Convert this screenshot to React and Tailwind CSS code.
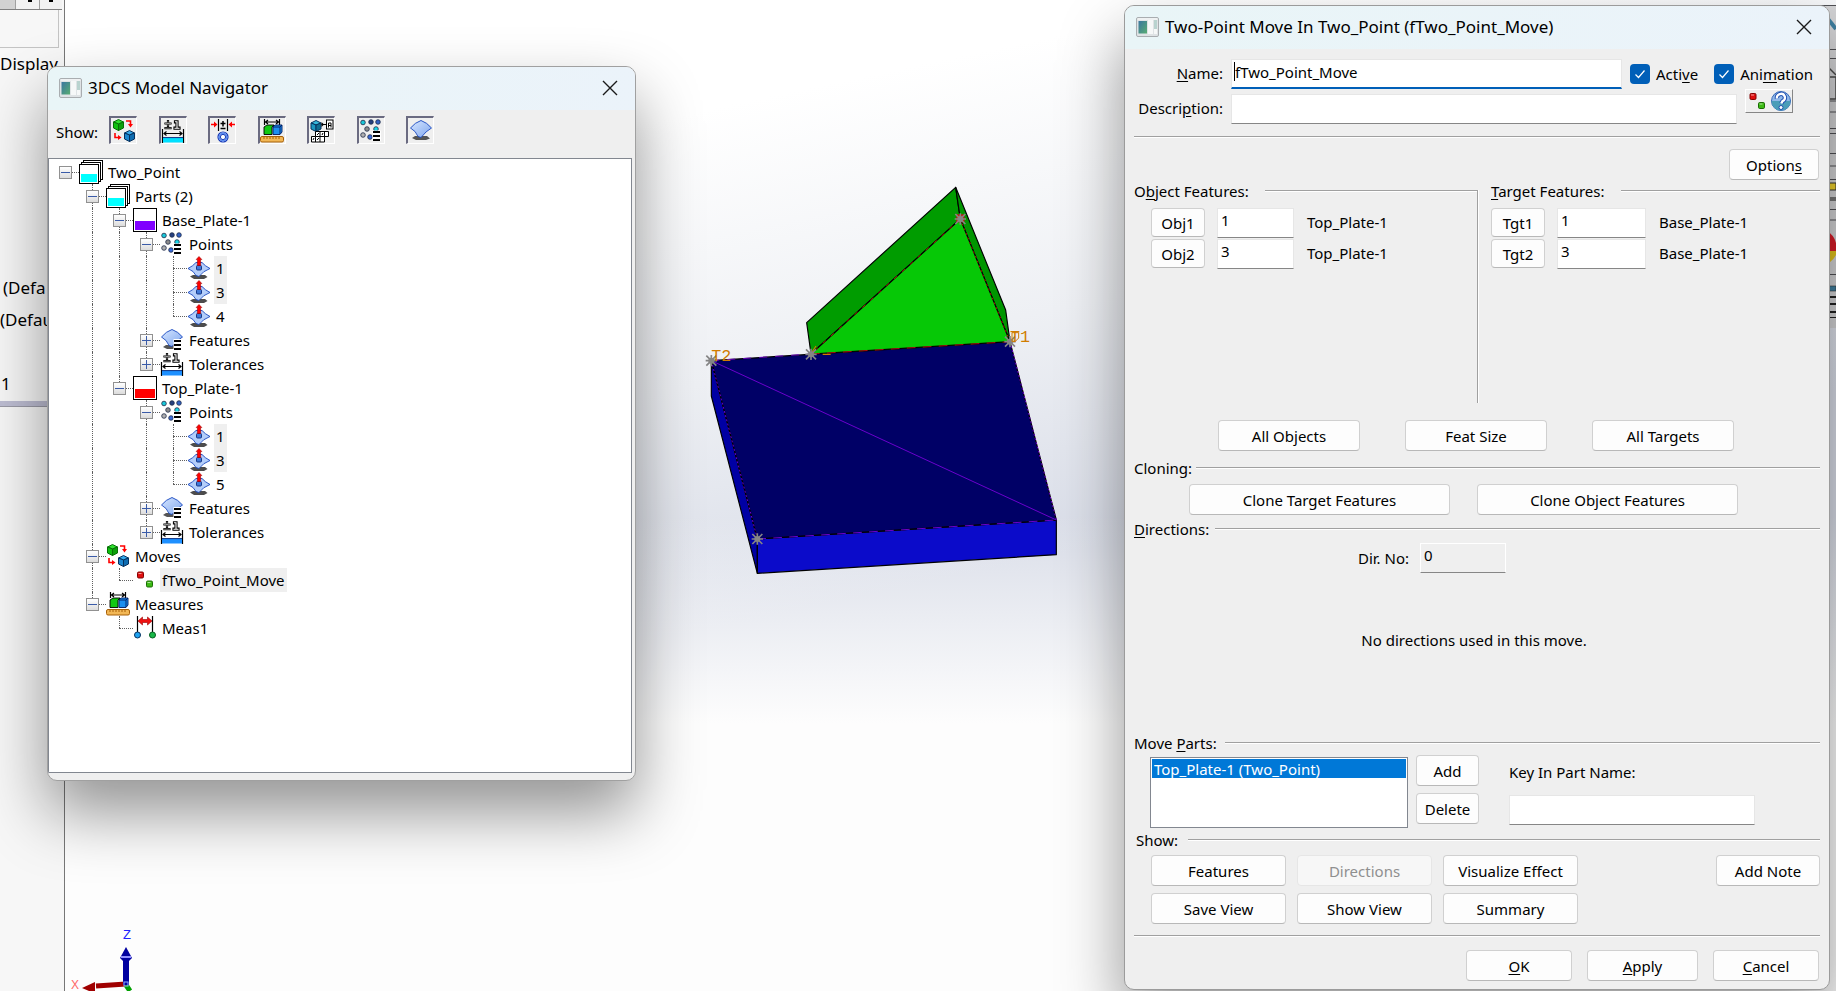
import React from "react";

/* ---------- icons ---------- */

function AppIcon() {
  return (
    <svg width="23" height="20" viewBox="0 0 23 20" className="shrink-0" aria-hidden="true">
      <defs>
        <linearGradient id="appPane" x1="0" y1="0" x2="1" y2="1">
          <stop offset="0" stopColor="#3b76a0" />
          <stop offset="1" stopColor="#58ad72" />
        </linearGradient>
      </defs>
      <rect x="0.5" y="0.5" width="22" height="19" rx="1.5" fill="#dfe3e5" stroke="#a9adb0" />
      <path d="M1.500 2 H21.500" stroke="#fff" />
      <rect x="2.500" y="4" width="8.500" height="12.500" fill="url(#appPane)" />
      <rect x="12" y="3" width="5" height="14" fill="#f6f8f8" />
      <rect x="18" y="3" width="3" height="9" fill="#b9d3cf" />
      <rect x="18" y="12" width="3" height="5" fill="#f6f8f8" />
    </svg>
  );
}

function CloseIcon() {
  return (
    <svg width="16" height="16" viewBox="0 0 16 16" aria-hidden="true">
      <path d="M1 1 L15 15 M15 1 L1 15" stroke="#1a1a1a" strokeWidth="1.4" fill="none" />
    </svg>
  );
}

function Svg24({ children }) {
  return (
    <svg width="24" height="24" viewBox="0 0 24 24" className="shrink-0" aria-hidden="true">
      {children}
    </svg>
  );
}

function Cube({ x, y, top, left, right, edge }) {
  return (
    <g transform={`translate(${x} ${y})`} stroke={edge} strokeWidth="1" strokeLinejoin="round">
      <path d="M5.5 0.5 L10.5 3 L5.5 5 L0.5 3 Z" fill={top} />
      <path d="M0.5 3 L5.5 5 V11.5 L0.5 9 Z" fill={left} />
      <path d="M10.5 3 L5.5 5 V11.5 L10.5 9 Z" fill={right} />
    </g>
  );
}

function MovesIcon() {
  return (
    <Svg24>
      <Cube x={1} y={0} top="#2ee02e" left="#10c010" right="#0aa00a" edge="#067006" />
      <Cube x={12} y={11} top="#35a8ea" left="#1b86cf" right="#0f6cb0" edge="#06315e" />
      <path d="M14 2 H18.500 V6" stroke="#f00" strokeWidth="1.600" fill="none" />
      <path d="M16 5 H21 L18.500 8.500 Z" fill="#f00" />
      <path d="M3 14 V18.500 H6" stroke="#f00" strokeWidth="1.600" fill="none" />
      <path d="M6 16 V21 L9.500 18.500 Z" fill="#f00" />
    </Svg24>
  );
}

const plusMinus = "M4.500 4.500 H9.500 M7 2.200 V6.800 M4.500 9.200 H9.500";
const digitOne = "M14.500 2.800 H16 V9 M14 9.200 H18";

function ToleranceIcon({ water }) {
  return (
    <Svg24>
      <path d="M1.5 10 V24 M22.5 10 V24" stroke="#000" strokeWidth="1.2" />
      <path d="M3 14.5 H21 M5.500 12.500 L3 14.5 L5.500 16.500 M18.500 12.500 L21 14.5 L18.500 16.500" stroke="#000" strokeWidth="1.2" fill="none" />
      <rect x="2" y="19" width="20" height="4.500" fill={water} />
      <path d="M2 18.6 H22" stroke="#002a80" strokeWidth="1" />
      <g fill="none" strokeLinecap="square">
        <path d={plusMinus} stroke="#000" strokeWidth="2.200" />
        <path d={digitOne} stroke="#000" strokeWidth="3.200" />
        <path d={plusMinus} stroke="#fff" strokeWidth="0.500" />
        <path d={digitOne} stroke="#fff" strokeWidth="1.100" />
      </g>
    </Svg24>
  );
}

function GtolIcon() {
  return (
    <Svg24>
      <path d="M0 5.5 H4 M24 5.5 H20" stroke="#f00" strokeWidth="1.6" />
      <path d="M3 2.5 L6.5 5.5 L3 8.5 Z M21 2.5 L17.500 5.5 L21 8.500 Z" fill="#f00" />
      <path d="M7.500 0 V12 M16.500 0 V12" stroke="#000" strokeWidth="1.2" />
      <path d="M9.500 4.500 H14.500 M12 2 V7.500 M9.500 9.500 H14.500" stroke="#000" strokeWidth="1.500" />
      <circle cx="12" cy="18" r="5" fill="#fff" stroke="#1438b8" strokeWidth="1.200" />
      <circle cx="12" cy="18" r="3.600" fill="#fff" stroke="#5a8cf0" strokeWidth="1.600" />
      <circle cx="12" cy="18" r="2.600" fill="#fff" stroke="#1438b8" strokeWidth="1" />
    </Svg24>
  );
}

function MeasuresIcon() {
  return (
    <Svg24>
      <path d="M4.5 0 V6 M19.500 0 V6 M5 3 H19 M8 1 L5.500 3 L8 5 M16 1 L18.500 3 L16 5" stroke="#000" strokeWidth="1.2" fill="none" />
      <path d="M4 8 L7 6 H14 L12 8 V15.500 H4 Z" fill="#12c812" stroke="#000" strokeWidth="0.900" />
      <path d="M13 8 L15 6 H22 V13 L20 15.500 H13 Z" fill="#1c8ff0" stroke="#001b60" strokeWidth="0.900" />
      <path d="M13 8 H20 V15 M20 8 L22 6" stroke="#001b60" strokeWidth="0.900" fill="none" />
      <rect x="0.500" y="17.500" width="23" height="5.500" rx="1.500" fill="#f2b755" stroke="#a86008" />
      <path d="M4 18 V20 M7 18 V20 M10 18 V20 M13 18 V20 M16 18 V20 M19 18 V20" stroke="#a86008" />
    </Svg24>
  );
}

function DatumIcon() {
  return (
    <Svg24>
      <Cube x={0.5} y={1} top="#35b8da" left="#1b96bf" right="#0f6c90" edge="#06315e" />
      <path d="M11.500 5.500 H16" stroke="#000" strokeWidth="1.2" />
      <path d="M11.500 3 L14 5.500 L11.500 8 Z" fill="#000" />
      <rect x="16.500" y="1" width="6.500" height="9" fill="#fff" stroke="#000" />
      <path d="M18.500 8.500 V4 H21 V8.500 M18.500 6.500 H21" stroke="#000" fill="none" />
      <path d="M5.500 12.500 H18.500 V17.500 H14.500 V23 H1.500 V17.500 H5.500 Z M5.500 17.500 H14.500 M10 12.500 V23 M14.500 12.500 V17.500 M5.500 17.500 V23" stroke="#000" fill="#fff" />
      <path d="M7 16 L9 14 M12 16 L13 14 M3 21 L4 19 M7 21 L9 19" stroke="#000" />
    </Svg24>
  );
}

function PointsIcon() {
  const dots = [
    [4, 3.5, "#19c7d8"], [12, 3, "#26407f"], [19, 3, "#3262c4"],
    [8, 10, "#8b8b8b"], [17, 10, "#19d8e8"],
    [4, 16, "#b0b0b0"], [11, 18, "#3a6ad8"],
  ];
  return (
    <Svg24>
      {dots.map(([cx, cy, fill]) => (
        <circle key={`${cx}-${cy}`} cx={cx} cy={cy} r="2.300" fill={fill} stroke="#1d2a48" strokeWidth="0.800" />
      ))}
      <path d="M13.500 11.500 H22 V22 H13.500 Z" fill="#fff" />
      <path d="M14 13 H21 M14 17 H21 M14 21 H21" stroke="#000" strokeWidth="2" />
    </Svg24>
  );
}

function Surface() {
  return (
    <g>
      <defs>
        <linearGradient id="surf" x1="0" y1="0" x2="1" y2="1">
          <stop offset="0" stopColor="#d6e6ff" />
          <stop offset="1" stopColor="#7fa6ee" />
        </linearGradient>
      </defs>
      <path d="M3 19 L6 17 H18 L21 19.500 L17 21 H7 Z" fill="#555" />
      <path d="M1.500 9 Q6 3.500 12 1.500 Q18 3.500 22.500 9 Q17 12 12 18.500 L9 17.500 Q7 12 1.500 9 Z" fill="url(#surf)" stroke="#1747c0" strokeWidth="0.900" />
    </g>
  );
}

function SurfaceIcon() {
  return <Svg24><Surface /></Svg24>;
}

function FeaturesIcon() {
  return (
    <Svg24>
      <Surface />
      <path d="M13.500 11 H23 V22 H13.500 Z" fill="#fff" />
      <path d="M14 13 H21 M14 17 H21 M14 21 H21" stroke="#000" strokeWidth="2" />
    </Svg24>
  );
}

function PointIcon() {
  return (
    <Svg24>
      <path d="M3 20.500 L6 19 H18 L20.500 21 L17 23 H7 Z" fill="#4c4c4c" />
      <path d="M1 12.500 Q6 10 9 6.500 H15 Q18 10 23 12.500 Q16 15 12 20.500 L9 19.500 Q7 15 1 12.500 Z" fill="#b4cefa" stroke="#1747c0" strokeWidth="0.900" />
      <rect x="9.500" y="9.500" width="5" height="4.500" rx="1" fill="#3f78d8" stroke="#0c2c80" strokeWidth="0.900" />
      <path d="M12 0.500 L14.800 3.500 H13.600 V9.500 H10.400 V3.500 H9.200 Z" fill="#f00" stroke="#a00000" strokeWidth="0.600" />
    </Svg24>
  );
}

function PartIcon({ fill }) {
  return (
    <Svg24>
      <rect x="0.500" y="0.500" width="23" height="23" fill="#fff" stroke="#000" strokeWidth="1" />
      <rect x="2" y="13" width="20" height="9" fill={fill} />
    </Svg24>
  );
}

function AssemblyIcon() {
  return (
    <Svg24>
      <rect x="4.500" y="0.500" width="19" height="19" fill="#fff" stroke="#000" />
      <rect x="2.500" y="2.500" width="19" height="19" fill="#fff" stroke="#000" />
      <rect x="0.500" y="4.500" width="19" height="19" fill="#fff" stroke="#000" />
      <rect x="2" y="14" width="16" height="8" fill="#0ff" />
    </Svg24>
  );
}

function Block({ x, y, fill, edge }) {
  return (
    <g>
      <rect x={x} y={y} width="6" height="6" rx="1.200" fill={fill} stroke={edge} />
      <path d={`M${x + 1} ${y + 1.500} h3`} stroke="#fff" strokeOpacity="0.600" />
    </g>
  );
}

function TwoPointIcon() {
  return (
    <Svg24>
      <Block x={4.5} y={4} fill="#e01010" edge="#800000" />
      <Block x={13.5} y={13} fill="#3cba14" edge="#1b6a05" />
    </Svg24>
  );
}

function MeasureIcon() {
  return (
    <Svg24>
      <path d="M4.500 0 V16 M19.500 0 V16" stroke="#000" strokeWidth="1.200" />
      <path d="M5 5 L9.500 1 V3.500 H14.500 V1 L19 5 L14.500 9 V6.500 H9.500 V9 Z" fill="#f01010" stroke="#900" strokeWidth="0.600" />
      <circle cx="4.500" cy="19" r="3" fill="#1ea2f0" stroke="#06315e" />
      <circle cx="19.500" cy="19" r="3" fill="#18b848" stroke="#065e20" />
    </Svg24>
  );
}

/* ---------- model navigator ---------- */

const asm = <AssemblyIcon />;
const point = <PointIcon />;
const points = <PointsIcon />;
const features = <FeaturesIcon />;
const tolerances = <ToleranceIcon water="#1e90ff" />;

const plate = (name, fill, labels) => ({
  label: name,
  icon: <PartIcon fill={fill} />,
  children: [
    {
      label: "Points",
      icon: points,
      children: labels.map((label, i) => ({ label, icon: point, marked: i < 2 })),
    },
    { label: "Features", icon: features, collapsed: true },
    { label: "Tolerances", icon: tolerances, collapsed: true },
  ],
});

const tree = {
  label: "Two_Point",
  icon: asm,
  children: [
    {
      label: "Parts (2)",
      icon: asm,
      children: [
        plate("Base_Plate-1", "#8000ff", ["1", "3", "4"]),
        plate("Top_Plate-1", "#ff0000", ["1", "3", "5"]),
      ],
    },
    {
      label: "Moves",
      icon: <MovesIcon />,
      children: [{ label: "fTwo_Point_Move", icon: <TwoPointIcon />, marked: true }],
    },
    {
      label: "Measures",
      icon: <MeasuresIcon />,
      children: [{ label: "Meas1", icon: <MeasureIcon /> }],
    },
  ],
};

function Expander({ open, label }) {
  return (
    <button
      type="button"
      aria-label={`${open ? "Collapse" : "Expand"} ${label}`}
      className="relative col-start-1 row-start-1 size-[13px] self-center justify-self-center border border-[#919191] bg-gradient-to-b from-white to-[#dcdcdc]"
    >
      <svg width="11" height="11" viewBox="0 0 11 11" className="block" aria-hidden="true">
        <path d={open ? "M1 5.5 H10" : "M1 5.5 H10 M5.5 1 V10"} stroke="#3a5ba8" fill="none" />
      </svg>
    </button>
  );
}

function TreeNode({ node, guides, root, last }) {
  const open = Boolean(node.children);
  return (
    <li role="treeitem" aria-expanded={open || node.collapsed ? open : undefined}>
      <div className="flex h-6 items-center">
        {guides.map((on, i) => (
          <span key={i} className="flex h-6 w-[27px] shrink-0 pl-[13px]">
            {on && <span className="border-l border-dotted border-[#606060]" />}
          </span>
        ))}
        <span className="grid h-6 w-[27px] shrink-0">
          <span className="col-start-1 row-start-1 grid grid-rows-2 pl-[13px]">
            <span className={root ? "" : "border-l border-dotted border-[#606060]"} />
            <span
              className={
                last
                  ? "border-t border-dotted border-[#606060]"
                  : "border-t border-l border-dotted border-[#606060]"
              }
            />
          </span>
          {(open || node.collapsed) && <Expander open={open} label={node.label} />}
        </span>
        {node.icon}
        <span className={node.marked ? "ml-[3px] bg-[#efefef] px-0.5 leading-6" : "ml-[3px] px-0.5 leading-6"}>
          {node.label}
        </span>
      </div>
      {open && (
        <ul role="group">
          {node.children.map((c, i) => (
            <TreeNode
              key={i}
              node={c}
              guides={[...guides, !last]}
              last={i === node.children.length - 1}
            />
          ))}
        </ul>
      )}
    </li>
  );
}

const toolbar = [
  ["Moves", <MovesIcon />],
  ["Tolerances", <ToleranceIcon water="#00e0ff" />],
  ["GD&T", <GtolIcon />],
  ["Measures", <MeasuresIcon />],
  ["Datums", <DatumIcon />],
  ["Points", points],
  ["Features", <SurfaceIcon />],
];

function TitleBar({ title }) {
  return (
    <header className="flex h-[43px] shrink-0 items-center bg-gradient-to-r from-[#e9f5f7] to-[#ebf3fa] pr-[17px] pb-0.5 pl-[11px]">
      <AppIcon />
      <h1 className="ml-1.5 flex-1 text-[17px]">{title}</h1>
      <button type="button" aria-label="Close">
        <CloseIcon />
      </button>
    </header>
  );
}

function Navigator() {
  return (
    <section
      aria-label="3DCS Model Navigator"
      className="absolute top-[66px] left-[47px] flex w-[589px] flex-col overflow-hidden rounded-[10px] border border-[#a0a0a0] bg-[#efefef] shadow-[0_32px_64px_rgba(0,0,0,0.42)]"
    >
      <TitleBar title="3DCS Model Navigator" />
      <div className="flex h-[48px] items-center pb-2 pl-2">
        <span className="w-[53px] pt-1">Show:</span>
        <div className="flex w-[325px] justify-between">
          {toolbar.map(([label, icon]) => (
            <button
              key={label}
              type="button"
              aria-label={label}
              className="flex size-7 items-center justify-center border-t-2 border-r border-b border-l-2 border-t-[#6a6a80] border-r-white border-b-white border-l-[#6a6a80]"
            >
              {icon}
            </button>
          ))}
        </div>
      </div>
      <div className="mr-[3px] mb-[7px] min-h-[615px] border border-[#828790] bg-white pl-[3px] pt-px">
        <ul role="tree" aria-label="Model">
          <TreeNode node={tree} guides={[]} root last />
        </ul>
      </div>
    </section>
  );
}

/* ---------- move dialog ---------- */

function Btn({ className = "", ...props }) {
  return (
    <button
      type="button"
      className={`shrink-0 rounded border border-[#d0d0d0] border-b-[#b8b8b8] bg-[#fdfdfd] whitespace-nowrap disabled:border-[#e6e6e6] disabled:bg-[#f7f7f7] disabled:text-[#8f8f8f] ${className}`}
      {...props}
    />
  );
}

function Key({ children }) {
  return <span className="underline underline-offset-2">{children}</span>;
}

function Line() {
  return <span className="h-0.5 flex-1 border-t border-b border-t-[#a0a0a0] border-b-white" />;
}

function Legend({ className, children }) {
  return (
    <div className={`flex items-center ${className}`}>
      <h2>{children}</h2>
      <Line />
    </div>
  );
}

function Check({ id, children }) {
  return (
    <span className="flex shrink-0 items-center gap-1.5">
      <span className="grid size-5 place-items-center">
        <input
          id={id}
          type="checkbox"
          defaultChecked
          className="col-start-1 row-start-1 size-5 appearance-none rounded bg-[#005fb8]"
        />
        <svg width="12" height="12" viewBox="0 0 12 12" className="pointer-events-none col-start-1 row-start-1" aria-hidden="true">
          <path d="M1.500 6.500 L4.500 9.500 L10.500 2.500" stroke="#fff" strokeWidth="1.200" fill="none" />
        </svg>
      </span>
      <label htmlFor={id}>{children}</label>
    </span>
  );
}

const field =
  "h-[30px] border border-[#e6e6e6] border-b-[#868686] bg-white px-[3px] pb-1.5 outline-none";

function FeatureRow({ button, value, part, width }) {
  return (
    <div className="flex h-[31px] items-center">
      <Btn className="h-[29px] w-[54px]">{button}</Btn>
      <input aria-label={button} defaultValue={value} className={`ml-3 ${field} ${width}`} />
      <span className="ml-[13px] pb-0.5">{part}</span>
    </div>
  );
}

function MoveDialog() {
  return (
    <section
      aria-label="Two-Point Move"
      className="absolute top-[5px] right-[6px] flex w-[706px] flex-col overflow-hidden rounded-[10px] border border-[#9b9b9b] bg-[#efefef] shadow-[0_32px_64px_rgba(0,0,0,0.42)]"
    >
      <TitleBar title="Two-Point Move In Two_Point (fTwo_Point_Move)" />
      <form className="flex flex-col px-[9px] pt-2.5 pb-2">
        <div className="flex h-[30px] items-center pr-[7px]">
          <label htmlFor="name" className="mr-2 w-[89px] pb-0.5 text-right">
            <Key>N</Key>ame:
          </label>
          <div className="relative flex flex-1">
            <input
              id="name"
              defaultValue="fTwo_Point_Move"
              className="h-[30px] w-full border border-b-2 border-[#e6e6e6] border-b-[#005fb8] bg-white px-[3px] pb-1 outline-none"
            />
            <span className="absolute top-[3px] left-[3px] h-[19px] w-px bg-black" />
          </div>
          <div className="ml-2 flex gap-4">
            <Check id="active">
              Acti<Key>v</Key>e
            </Check>
            <Check id="animation">
              Ani<Key>m</Key>ation
            </Check>
          </div>
        </div>
        <div className="flex h-[35px]">
          <label htmlFor="description" className="mr-2 w-[89px] pt-2 text-right">
            Descri<Key>p</Key>tion:
          </label>
          <input id="description" className={`mt-[5px] flex-1 ${field}`} />
          <button
            type="button"
            aria-label="Help"
            className="mr-[27px] ml-2 flex h-6 w-12 border border-t-white border-r-[#868686] border-b-[#868686] border-l-white"
          >
            <svg width="46" height="22" viewBox="0 0 46 22" aria-hidden="true">
              <Block x={4} y={3.5} fill="#e01010" edge="#800000" />
              <Block x={12.5} y={12.5} fill="#3cba14" edge="#1b6a05" />
              <circle cx="35" cy="11" r="9.500" fill="#8fb8e8" stroke="#3768b8" />
              <path d="M25.500 11 A9.500 9.500 0 0 0 44.500 11 Z" fill="#4a9db8" />
              <path d="M31 8.500 A4 3.800 0 1 1 36.500 11.200 L35.200 13.500" stroke="#1f4fb0" strokeWidth="4.400" fill="none" />
              <path d="M31 8.500 A4 3.800 0 1 1 36.500 11.200 L35.200 13.500" stroke="#fff" strokeWidth="2.400" fill="none" />
              <circle cx="35" cy="17.500" r="2" fill="#fff" stroke="#1f4fb0" />
            </svg>
          </button>
        </div>
        <div className="mt-3 flex">
          <Line />
        </div>
        <div className="mt-[11px] flex justify-end pr-px">
          <Btn className="h-[31px] w-[90px]">
            Option<Key>s</Key>
          </Btn>
        </div>

        <div className="flex h-[223px]">
          <div className="w-[343px]">
            <Legend className="h-[22px] gap-4">
              O<Key>b</Key>ject Features:
            </Legend>
            <div className="mt-[5px] pl-[17px]">
              <FeatureRow button="Obj1" value="1" part="Top_Plate-1" width="w-[77px]" />
              <FeatureRow button="Obj2" value="3" part="Top_Plate-1" width="w-[77px]" />
            </div>
          </div>
          <span className="mt-[10px] w-0.5 border-r border-l border-r-white border-l-[#a0a0a0]" />
          <div className="ml-3 flex-1">
            <Legend className="h-[22px] gap-4">
              <Key>T</Key>arget Features:
            </Legend>
            <div className="mt-[5px]">
              <FeatureRow button="Tgt1" value="1" part="Base_Plate-1" width="w-[89px]" />
              <FeatureRow button="Tgt2" value="3" part="Base_Plate-1" width="w-[89px]" />
            </div>
          </div>
        </div>

        <div className="mt-[17px] flex gap-[45px] pl-[84px]">
          <Btn className="h-[31px] w-[142px]">All Objects</Btn>
          <Btn className="h-[31px] w-[142px]">Feat Size</Btn>
          <Btn className="h-[31px] w-[142px]">All Targets</Btn>
        </div>

        <Legend className="h-[33px] gap-1">Cloning:</Legend>
        <div className="flex gap-[27px] pl-[55px]">
          <Btn className="h-[31px] w-[261px]">Clone Target Features</Btn>
          <Btn className="h-[31px] w-[261px]">Clone Object Features</Btn>
        </div>

        <Legend className="h-[28px] gap-1.5">
          <Key>D</Key>irections:
        </Legend>
        <div className="flex items-center gap-[11px] pl-[224px]">
          <label htmlFor="dir">Dir. No:</label>
          <input
            id="dir"
            readOnly
            value="0"
            className="h-[30px] w-[86px] border border-white border-b-[#868686] bg-[#efefef] px-[3px] pb-1.5 outline-none"
          />
        </div>
        <p className="mt-[56px] pr-1.5 text-center leading-[22px]">No directions used in this move.</p>

        <Legend className="mt-[81px] h-[22px] gap-2">
          Move <Key>P</Key>arts:
        </Legend>
        <div className="mt-px flex pl-4">
          <select
            multiple
            size={3}
            aria-label="Move parts"
            defaultValue={["top"]}
            className="mt-0.5 mr-2 h-[71px] w-[258px] overflow-hidden border border-[#828790] bg-white p-px outline-none"
          >
            <option
              value="top"
              className="h-[19px] bg-[linear-gradient(#0078d7,#0078d7)] p-0 pl-0.5 leading-[19px] text-white checked:text-white"
            >
              Top_Plate-1 (Two_Point)
            </option>
          </select>
          <div className="flex flex-col gap-[7px]">
            <Btn className="h-[31px] w-[63px]">Add</Btn>
            <Btn className="h-[31px] w-[63px]">Delete</Btn>
          </div>
          <div className="ml-[30px] flex flex-col gap-3 pt-1.5">
            <label htmlFor="part" className="leading-[22px]">Key In Part Name:</label>
            <input id="part" className={`w-[246px] ${field}`} />
          </div>
        </div>

        <Legend className="mb-[3px] h-6 gap-2.5 pl-0.5">Show:</Legend>
        <div className="flex justify-between pl-[17px]">
          <div className="grid grid-cols-[135px_135px_135px] gap-x-[11px] gap-y-[7px]">
            <Btn className="h-[31px]">Features</Btn>
            <Btn className="h-[31px]" disabled>Directions</Btn>
            <Btn className="h-[31px]">Visualize Effect</Btn>
            <Btn className="h-[31px]">Save View</Btn>
            <Btn className="h-[31px]">Show View</Btn>
            <Btn className="h-[31px]">Summary</Btn>
          </div>
          <Btn className="h-[31px] w-[104px]">Add Note</Btn>
        </div>
        <div className="mt-[11px] flex">
          <Line />
        </div>
        <div className="mt-[13px] flex justify-end gap-[15px] pr-px">
          <Btn className="h-[31px] w-[106px]">
            <Key>O</Key>K
          </Btn>
          <Btn className="h-[31px] w-[111px]">
            <Key>A</Key>pply
          </Btn>
          <Btn className="h-[31px] w-[106px]">
            <Key>C</Key>ancel
          </Btn>
        </div>
      </form>
    </section>
  );
}

/* ---------- CAD viewport ---------- */

function Star({ x, y, red }) {
  return (
    <g>
      {red && <rect x={x - 12} y={y - 14} width="24" height="24" fill="#d01010" />}
      <path
        d={`M${x - 17} ${y} h34 M${x} ${y - 17} v34 M${x - 15} ${y - 15} l30 30 M${x + 15} ${y - 15} l-30 30`}
        stroke="#858585"
        strokeWidth="5"
      />
      <circle cx={x} cy={y} r="9" fill="#858585" />
    </g>
  );
}

function Model() {
  return (
    <svg
      width="400"
      height="420"
      viewBox="0 0 1200 1260"
      className="absolute top-[170px] left-[625px] font-['Liberation_Mono',monospace]"
      role="img"
      aria-label="Base plate and top plate"
    >
      <g stroke="#000" strokeWidth="3.500" strokeLinejoin="round">
        <path d="M797 52 L350 458 L363 552 L811 147 Z" fill="#009c00" />
        <path d="M797 52 L947 420 L960 515 L811 147 Z" fill="#009600" />
        <path d="M64 572 V678 L202 1210 V1107 Z" fill="#0000a4" />
        <path d="M202 1107 L1099 1050 V1154 L202 1210 Z" fill="#0b0bca" />
        <path d="M64 572 L960 515 L1099 1050 L202 1107 Z" fill="#000066" />
        <path d="M811 147 L363 552 L960 515 Z" fill="#06c806" />
      </g>
      <g stroke="#d01010" strokeWidth="2.500" fill="none">
        <path d="M811 147 L363 552" strokeDasharray="12 20" />
        <path d="M811 147 L960 515" strokeDasharray="6 9" />
        <path d="M363 552 L960 515" strokeDasharray="26 22" />
      </g>
      <g stroke="#6a00cc" strokeWidth="3" fill="none">
        <path d="M64 572 L1099 1050" />
        <path d="M64 572 L363 552" strokeDasharray="24 24" />
        <path d="M64 572 L202 1107 M960 515 L1099 1050" strokeDasharray="6 7" />
        <path d="M202 1107 L1099 1050" strokeDasharray="26 22" />
      </g>
      <path d="M362 552 L378 528 M398 553 H422" stroke="#d07c00" strokeWidth="3.500" fill="none" />
      <Star x={811} y={147} red />
      <Star x={64} y={572} />
      <Star x={363} y={553} />
      <Star x={960} y={515} />
      <Star x={202} y={1107} />
      <text x="64" y="573" fontSize="50" fill="#d07c00">T2</text>
      <text x="960" y="516" fontSize="50" fill="#d07c00">T1</text>
      <path d="M966 488 V514 H976 L986 504 V488 Z" stroke="#d07c00" strokeWidth="3" fill="none" />
    </svg>
  );
}

function Triad() {
  return (
    <svg
      width="70"
      height="64"
      viewBox="0 0 70 64"
      className="absolute bottom-0 left-0 font-['Liberation_Sans',sans-serif]"
      role="img"
      aria-label="Axes"
    >
      <text x="58" y="12" fontSize="13" fill="#2020ff">Z</text>
      <text x="6" y="62" fontSize="12" fill="#ff6868">X</text>
      <path d="M61 57 L31 59" stroke="#a00000" strokeWidth="5" />
      <path d="M17 61 L30 55 V64 H24 Z" fill="#a00000" />
      <path d="M61 58 L65 64" stroke="#00a000" strokeWidth="5" />
      <path d="M61 58 V30" stroke="#0000a0" strokeWidth="6" />
      <path d="M61 20 L67 31 L64 34 H58 L55 31 Z" fill="#0000a0" />
      <path d="M56 30 H66" stroke="#8f8fff" strokeWidth="2" />
      <rect x="59" y="55" width="4" height="4" fill="none" stroke="#8fb0ff" />
    </svg>
  );
}

function ViewToolbar() {
  return (
    <svg width="16" height="323" viewBox="0 0 16 323" className="absolute top-[5px] right-0" aria-hidden="true">
      <rect width="16" height="323" fill="#d4d4d6" />
      <path d="M0 0.500 H16 M8 44.500 H16 M8 53.500 H16 M8 96 H16 M8 107 H16 M8 123.500 H16 M8 128.500 H16 M8 148.500 H16 M8 161 H16 M8 174.500 H16 M8 204.500 H16 M8 215 H16 M8 269.500 H16" stroke="#505054" />
      <path d="M8 14 L16 24" stroke="#3f7fa0" strokeWidth="4" />
      <path d="M8 62 L16 70 M9 72 H16 V94 H9" stroke="#4a4a4a" strokeWidth="1.500" fill="none" />
      <rect x="8" y="178" width="8" height="7" fill="#f0d22c" stroke="#333" />
      <rect x="8" y="192" width="8" height="4" fill="#777" />
      <path d="M0 246 V224 A18 18 0 0 1 16 238 V246 Z" fill="#d81c28" />
      <path d="M0 246 H16 V250 A18 18 0 0 1 0 260 Z" fill="#e4c41c" />
      <rect x="8" y="281" width="8" height="5" fill="#3f7fa0" stroke="#333" strokeWidth="0.600" />
      <path d="M8 292 H16 M8 299 H16 M8 307 H16" stroke="#222" strokeWidth="2" />
      <path d="M8 312.500 H16" stroke="#222" />
    </svg>
  );
}

function LeftPanel() {
  return (
    <aside className="flex w-[65px] shrink-0 flex-col overflow-hidden border-r border-[#777] bg-[#f7f7f7] text-[17px] leading-8 whitespace-nowrap">
      <div className="flex h-[10px] w-[62px] border-b border-[#808080] bg-[#f2f2f2]">
        <span className="w-4 border-r border-[#a0a0a0] bg-[#d2d2d2]" />
        <span className="flex w-6 justify-center border-r border-[#a0a0a0]">
          <span className="ml-1 h-0.5 w-1 bg-black" />
        </span>
        <span className="flex flex-1 justify-center">
          <span className="h-0.5 w-1 bg-black" />
        </span>
      </div>
      <div className="h-[38px] w-[59px] border-r border-b border-[#c4c4c4]" />
      <div>Display</div>
      <div className="mt-[192px] pl-[3px]">(Defa</div>
      <div>(Defau</div>
      <div className="mt-8 pl-px">1</div>
      <div className="mt-px h-1.5 border-b border-[#9a9aa6] bg-[#bdbdd2]" />
    </aside>
  );
}

export default function App() {
  return (
    <main className="relative flex h-screen w-full overflow-hidden font-['Noto_Sans',sans-serif] text-[15px] leading-[22px] text-black">
      <LeftPanel />
      <div className="relative flex-1 overflow-hidden bg-[linear-gradient(to_bottom,transparent_52%,#fdfdfd_73%),linear-gradient(168deg,#ffffff_18%,#eef0f4_38%,#d9dde8_56%)]">
        <Model />
        <Triad />
        <ViewToolbar />
      </div>
      <Navigator />
      <MoveDialog />
    </main>
  );
}
